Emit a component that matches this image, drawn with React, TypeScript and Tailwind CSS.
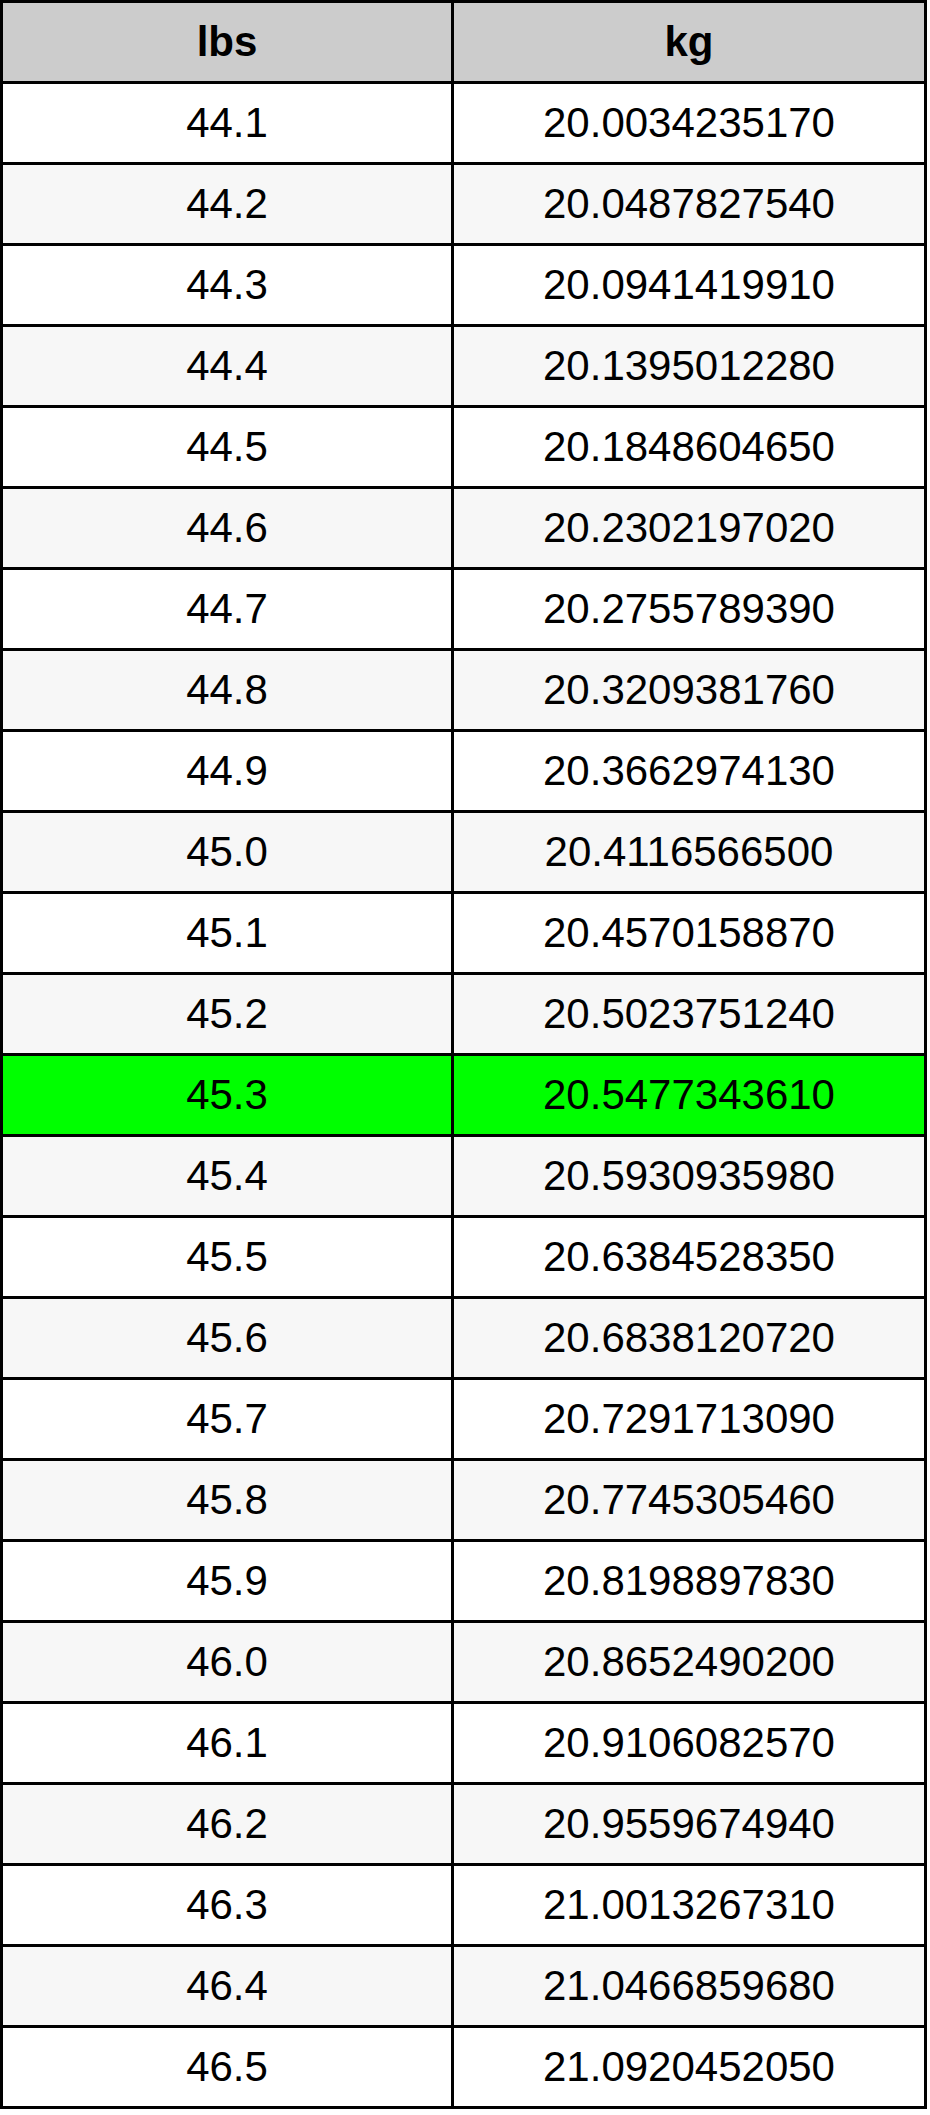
const rows: [string, string][] = [
  ["44.1", "20.0034235170"],
  ["44.2", "20.0487827540"],
  ["44.3", "20.0941419910"],
  ["44.4", "20.1395012280"],
  ["44.5", "20.1848604650"],
  ["44.6", "20.2302197020"],
  ["44.7", "20.2755789390"],
  ["44.8", "20.3209381760"],
  ["44.9", "20.3662974130"],
  ["45.0", "20.4116566500"],
  ["45.1", "20.4570158870"],
  ["45.2", "20.5023751240"],
  ["45.3", "20.5477343610"],
  ["45.4", "20.5930935980"],
  ["45.5", "20.6384528350"],
  ["45.6", "20.6838120720"],
  ["45.7", "20.7291713090"],
  ["45.8", "20.7745305460"],
  ["45.9", "20.8198897830"],
  ["46.0", "20.8652490200"],
  ["46.1", "20.9106082570"],
  ["46.2", "20.9559674940"],
  ["46.3", "21.0013267310"],
  ["46.4", "21.0466859680"],
  ["46.5", "21.0920452050"],
];

const cell = "h-[78px] flex items-center justify-center";

const App = () => {
  return (
    <div className="bg-white min-h-screen" style={{ fontFamily: '"Liberation Sans", Arial, sans-serif' }}>
      <div className="w-[927px] grid grid-cols-[448px_470px] gap-[3px] border-[3px] border-black bg-black text-[42px] text-black leading-none">
        <div className={`${cell} bg-[#cccccc] font-bold`}>lbs</div>
        <div className={`${cell} bg-[#cccccc] font-bold`}>kg</div>
        {rows.map(([lbs, kg], i) => {
          const bg = lbs === "45.3" ? "bg-[#00ff00]" : i % 2 === 0 ? "bg-white" : "bg-[#f7f7f7]";
          return [
            <div key={lbs + "a"} className={`${cell} ${bg}`}>{lbs}</div>,
            <div key={lbs + "b"} className={`${cell} ${bg}`}>{kg}</div>,
          ];
        })}
      </div>
    </div>
  );
};

export default App;
